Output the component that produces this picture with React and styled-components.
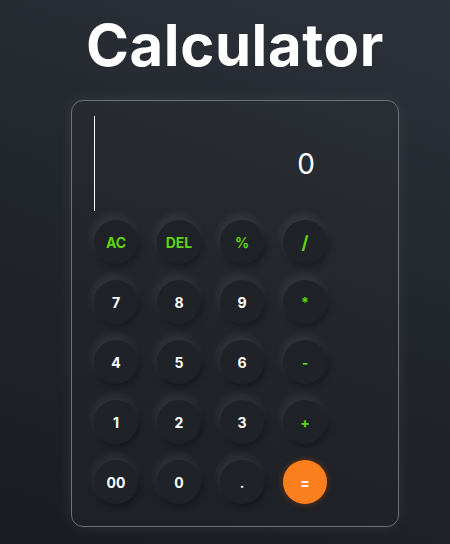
import { useState } from "react"
import styled, { createGlobalStyle } from "styled-components"

const GlobalStyle = createGlobalStyle`
    html, body {
        margin: 0;
        padding: 0;
    }
    body {
        background: linear-gradient(200deg, #2d323a 0%, #22262d 45%, #1a1c21 100%);
        min-height: 100vh;
        font-family: Inter, "Noto Sans", sans-serif;
    }
`

const keys = [
    ["AC", "op"], ["DEL", "op"], ["%", "op"], ["/", "op"],
    ["7"], ["8"], ["9"], ["*", "op"],
    ["4"], ["5"], ["6"], ["-", "op"],
    ["1"], ["2"], ["3"], ["+", "op"],
    ["00"], ["0"], ["."], ["=", "eq"],
]

const App = () => {
    const [value, setValue] = useState("0")

    const press = (k) => {
        if (k === "AC") return setValue("0")
        if (k === "DEL") return setValue(value.length > 1 ? value.slice(0, -1) : "0")
        if (k === "=") {
            try {
                // eslint-disable-next-line no-new-func
                setValue(String(Function("return " + value)()))
            } catch (e) {
                setValue("0")
            }
            return
        }
        setValue(value === "0" ? k : value + k)
    }

    return (
        <Container>
            <GlobalStyle />
            <Title>Calculator</Title>
            <Card>
                <Display>{value}</Display>
                <Keys>
                    {keys.map(([k, kind]) => (
                        <Key key={k} kind={kind} onClick={() => press(k)}>{k}</Key>
                    ))}
                </Keys>
            </Card>
        </Container>
    )
}

export default App

const Container = styled.div`
    width: 100%;
    min-height: 100vh;
    display: flex;
    flex-direction: column;
    align-items: center;
    padding-left: 20px;
    box-sizing: border-box;
`
const Title = styled.h1`
    margin: 10px 0 0;
    height: 90px;
    color: #ffffff;
    font-size: 58px;
    font-weight: 700;
    letter-spacing: 0.6px;
    line-height: 70px;
`
const Card = styled.div`
    width: 328px;
    height: 427px;
    box-sizing: border-box;
    padding: 15px 22px 22px;
    border: 1px solid #6c7079;
    border-radius: 12px;
    background: linear-gradient(200deg, #2a2e35 0%, #22252b 50%, #1d2025 100%);
    box-shadow: 0 0 16px rgba(255, 255, 255, 0.08);
    display: flex;
    flex-direction: column;
    gap: 9px;
`
const Display = styled.div`
    width: 233px;
    height: 97px;
    box-sizing: border-box;
    border-left: 1px solid #ffffff;
    padding-right: 12px;
    display: flex;
    align-items: center;
    justify-content: flex-end;
    color: #ffffff;
    font-size: 28px;
    font-weight: 400;
`
const Keys = styled.div`
    display: grid;
    grid-template-columns: repeat(4, 44px);
    grid-auto-rows: 44px;
    column-gap: 19px;
    row-gap: 16px;
`
const Key = styled.button`
    width: 44px;
    height: 44px;
    border: none;
    border-radius: 50%;
    padding: 0;
    font-family: Inter, "Noto Sans", sans-serif;
    font-size: ${(p) => (p.children === "/" ? "18px" : "14px")};
    font-weight: 700;
    color: ${(p) => (p.kind === "op" ? "#5ed414" : "#ffffff")};
    background: ${(p) => (p.kind === "eq" ? "#fb7f1c" : "#1f2227")};
    box-shadow: ${(p) =>
        p.kind === "eq"
            ? "0 0 6px rgba(160, 70, 10, 0.6)"
            : "-2px -5px 9px rgba(255, 255, 255, 0.08), 2px 3px 6px rgba(0, 0, 0, 0.3)"};
    cursor: pointer;
`
